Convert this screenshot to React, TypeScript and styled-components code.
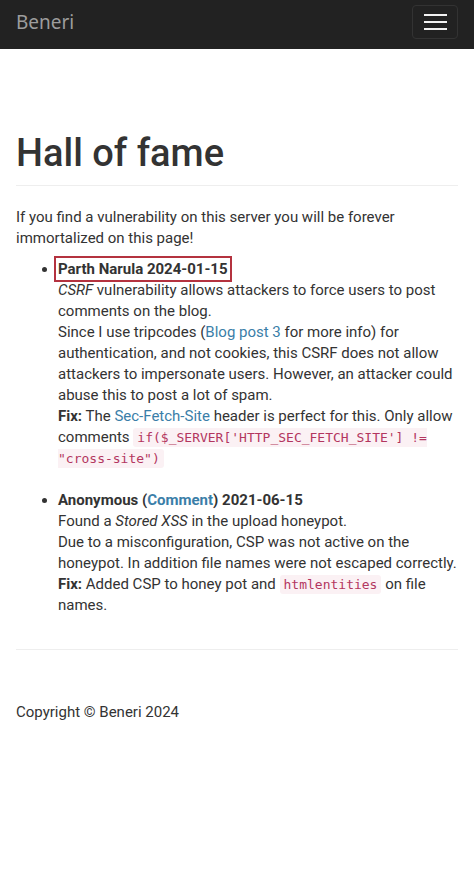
import React from 'react';
import styled, { createGlobalStyle } from 'styled-components';

const GlobalStyle = createGlobalStyle`
  body {
    margin: 0;
    background: #ffffff;
    color: #333333;
    font-family: Roboto, "Liberation Sans", sans-serif;
    font-size: 15px;
    line-height: 21px;
  }
`;

const NavBar = styled.nav`
  height: 49px;
  background-color: #222222;
  display: flex;
  align-items: center;
  justify-content: space-between;
  padding: 0 16px;
  box-sizing: border-box;
`;

const Brand = styled.a`
  font-family: "Noto Sans", "Open Sans", sans-serif;
  font-size: 19px;
  color: #9d9d9d;
  text-decoration: none;
  margin-top: -4px;
`;

const Toggler = styled.button`
  width: 46px;
  height: 34px;
  margin-top: -5px;
  background: transparent;
  border: 1px solid #333333;
  border-radius: 4px;
  display: flex;
  flex-direction: column;
  align-items: center;
  justify-content: center;
  gap: 5px;
  padding: 0;
`;

const TogglerBar = styled.span`
  display: block;
  width: 23px;
  height: 2px;
  background: #f2f2f2;
`;

const Main = styled.main`
  padding: 0 16px;
`;

const Title = styled.h1`
  font-size: 38px;
  font-weight: 500;
  line-height: 44px;
  margin: 0;
  padding-top: 82px;
  padding-bottom: 10px;
  border-bottom: 1px solid #eeeeee;
  color: #333333;
`;

const Intro = styled.p`
  margin: 21px 0 10px;
`;

const EntryList = styled.ul`
  margin: 0;
  padding-left: 42px;
`;

const Entry = styled.li`
  margin-bottom: 21px;
`;

const Highlight = styled.span`
  outline: 2px solid #b4323f;
  outline-offset: 2px;
`;

const Link = styled.a`
  color: #3a7ea8;
  text-decoration: none;
`;

const Code = styled.code`
  font-family: "DejaVu Sans Mono", "Liberation Mono", monospace;
  font-size: 13px;
  color: #b3365f;
  background-color: #fbf1f4;
  padding: 2px 4px;
  border-radius: 3px;
`;

const Divider = styled.hr`
  border: 0;
  border-top: 1px solid #eeeeee;
  margin: 33px 0 0;
`;

const Footer = styled.footer`
  padding: 52px 16px 0;
`;

export default function App() {
  return (
    <>
      <GlobalStyle />
      <NavBar>
        <Brand href="#">Beneri</Brand>
        <Toggler type="button" aria-label="Toggle navigation">
          <TogglerBar />
          <TogglerBar />
          <TogglerBar />
        </Toggler>
      </NavBar>
      <Main>
        <Title>Hall of fame</Title>
        <Intro>If you find a vulnerability on this server you will be forever immortalized on this page!</Intro>
        <EntryList>
          <Entry>
            <b><Highlight>Parth Narula 2024-01-15</Highlight></b>
            <br />
            <i>CSRF</i> vulnerability allows attackers to force users to post comments on the blog.
            <br />
            Since I use tripcodes (<Link href="#">Blog post 3</Link> for more info) for authentication, and not cookies, this CSRF does not allow attackers to impersonate users. However, an attacker could abuse this to post a lot of spam.
            <br />
            <b>Fix:</b> The <Link href="#">Sec-Fetch-Site</Link> header is perfect for this. Only allow comments{' '}
            <Code>if($_SERVER['HTTP_SEC_FETCH_SITE'] != "cross-site")</Code>
          </Entry>
          <Entry>
            <b>Anonymous (<Link href="#">Comment</Link>) 2021-06-15</b>
            <br />
            Found a <i>Stored XSS</i> in the upload honeypot.
            <br />
            Due to a misconfiguration, CSP was not active on the honeypot. In addition file names were not escaped correctly.
            <br />
            <b>Fix:</b> Added CSP to honey pot and <Code>htmlentities</Code> on file names.
          </Entry>
        </EntryList>
        <Divider />
      </Main>
      <Footer>Copyright © Beneri 2024</Footer>
    </>
  );
}
